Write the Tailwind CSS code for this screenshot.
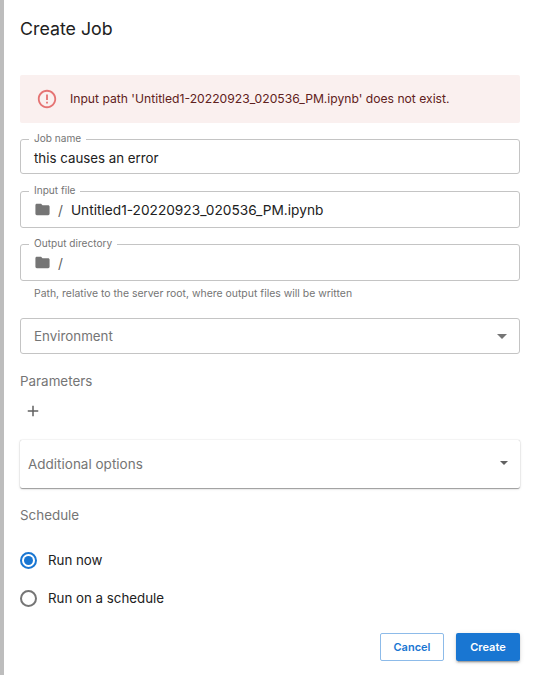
<!DOCTYPE html>
<html lang="en">
<head>
    <meta charset="UTF-8">
    <title>Create Job</title>
    <script src="https://cdn.jsdelivr.net/npm/@tailwindcss/browser@4"></script>
</head>
<body class="bg-white font-['Inter','Liberation_Sans',sans-serif] overflow-hidden">
    <div class="h-[675px] w-[534px] border-l-4 border-[#bdbdbd] pl-4 pr-[14px] relative">
        <h1 class="text-[17.8px] leading-[22px] pt-[18px] text-[#212121]">Create Job</h1>

        <!-- Error -->
        <div class="mt-[35px] h-[48px] bg-[#faf0ef] rounded-[2px] flex items-center pl-[17px] text-[12.15px] text-[#5f2120]">
            <svg class="w-[22px] h-[22px] shrink-0 -ml-[1px]" viewBox="0 0 24 24" fill="#e57373"><path d="M11 15h2v2h-2zm0-8h2v6h-2zm.99-5C6.47 2 2 6.48 2 12s4.47 10 9.99 10C17.52 22 22 17.52 22 12S17.52 2 11.99 2zM12 20c-4.42 0-8-3.58-8-8s3.58-8 8-8 8 3.58 8 8-3.58 8-8 8z"/></svg>
            <span class="ml-[12px]">Input path 'Untitled1-20220923_020536_PM.ipynb' does not exist.</span>
        </div>

        <!-- Job name -->
        <fieldset class="mt-[10px] h-[41px] border border-[#c4c4c4] rounded-[3px] px-[8px]">
            <legend class="text-[10.1px] leading-[12px] px-[5px] text-[#757575] -translate-y-[1px]">Job name</legend>
            <div class="px-[5px] text-[13.3px] leading-[20px] text-[#212121] mt-[3px]">this causes an error</div>
        </fieldset>

        <!-- Input file -->
        <fieldset class="mt-[11px] h-[43px] border border-[#c4c4c4] rounded-[3px] px-[8px]">
            <legend class="text-[10.1px] leading-[12px] px-[5px] text-[#757575] -translate-y-[1px]">Input file</legend>
            <div class="px-[5px] flex items-center text-[13.7px] leading-[20px] text-[#212121] mt-[3px]">
                <svg class="w-[17px] h-[17px] shrink-0 -mt-[2px]" viewBox="0 0 24 24" fill="#757575"><path d="M10 4H4c-1.1 0-2 .9-2 2v12c0 1.1.9 2 2 2h16c1.100 0 2-.9 2-2V8c0-1.100-.9-2-2-2h-8l-2-2z"/></svg>
                <span class="ml-[7px] text-[#616161]">/</span>
                <span class="ml-[8px]">Untitled1-20220923_020536_PM.ipynb</span>
            </div>
        </fieldset>

        <!-- Output directory -->
        <fieldset class="mt-[10px] h-[43px] border border-[#c4c4c4] rounded-[3px] px-[8px]">
            <legend class="text-[10.1px] leading-[12px] px-[5px] text-[#757575] -translate-y-[1px]">Output directory</legend>
            <div class="px-[5px] flex items-center text-[13.7px] leading-[20px] text-[#212121] mt-[3px]">
                <svg class="w-[17px] h-[17px] shrink-0 -mt-[2px]" viewBox="0 0 24 24" fill="#757575"><path d="M10 4H4c-1.1 0-2 .9-2 2v12c0 1.1.9 2 2 2h16c1.100 0 2-.9 2-2V8c0-1.100-.9-2-2-2h-8l-2-2z"/></svg>
                <span class="ml-[7px] text-[#616161]">/</span>
            </div>
        </fieldset>
        <p class="mt-[7px] px-[14px] text-[10.45px] leading-[12px] text-[#757575]">Path, relative to the server root, where output files will be written</p>

        <!-- Environment -->
        <div class="mt-[18px] h-[36px] border border-[#c4c4c4] rounded-[3px] flex items-center justify-between pl-[13px] pr-[12px] text-[13.35px] text-[#757575]">
            <span class="mt-[1px]">Environment</span>
            <span class="w-0 h-0 mt-[1px] border-x-[5px] border-x-transparent border-t-[5px] border-t-[#757575]"></span>
        </div>

        <div class="mt-[18px] text-[13.4px] leading-[18px] text-[#757575]">Parameters</div>
        <svg class="w-[18px] h-[18px] ml-[4px] mt-[12px]" viewBox="0 0 24 24" fill="#616161"><path d="M19 13h-6v6h-2v-6H5v-2h6V5h2v6h6v2z"/></svg>

        <!-- Additional options -->
        <div class="mt-[20px] h-[48px] bg-white rounded-[2px] flex items-center justify-between pl-[8px] pr-[12px] text-[13.5px] text-[#757575] shadow-[0_0_1px_0_rgba(0,0,0,0.3),0_2px_1px_-1px_rgba(0,0,0,0.2),0_1px_1px_0_rgba(0,0,0,0.14),0_1px_3px_0_rgba(0,0,0,0.12)]">
            <span class="mt-[1px]">Additional options</span>
            <span class="w-0 h-0 -mt-[2px] border-x-[4px] border-x-transparent border-t-[4px] border-t-[#616161]"></span>
        </div>

        <div class="mt-[18px] text-[13.4px] leading-[18px] text-[#757575]">Schedule</div>

        <!-- Radios -->
        <div class="mt-[17px] flex items-center h-[38px] text-[13.3px] text-[#212121]">
            <span class="w-[17px] h-[17px] rounded-full border-2 border-[#1976d2] flex items-center justify-center">
                <span class="w-[9px] h-[9px] rounded-full bg-[#1976d2]"></span>
            </span>
            <span class="ml-[11px] mt-[1px]">Run now</span>
        </div>
        <div class="flex items-center h-[38px] text-[13.3px] text-[#212121]">
            <span class="w-[17px] h-[17px] rounded-full border-2 border-[#757575]"></span>
            <span class="ml-[11px] mt-[1px]">Run on a schedule</span>
        </div>

        <!-- Buttons -->
        <div class="mt-[16px] flex justify-end gap-[12px] text-[11px] font-semibold">
            <button class="w-[64px] h-[28px] rounded-[2px] border border-[#8dbbe9] text-[#1976d2]">Cancel</button>
            <button class="w-[64px] h-[28px] rounded-[2px] bg-[#1976d2] text-white shadow-[0_3px_1px_-2px_rgba(0,0,0,0.2),0_2px_2px_0_rgba(0,0,0,0.14),0_1px_5px_0_rgba(0,0,0,0.12)]">Create</button>
        </div>
    </div>
</body>
</html>
